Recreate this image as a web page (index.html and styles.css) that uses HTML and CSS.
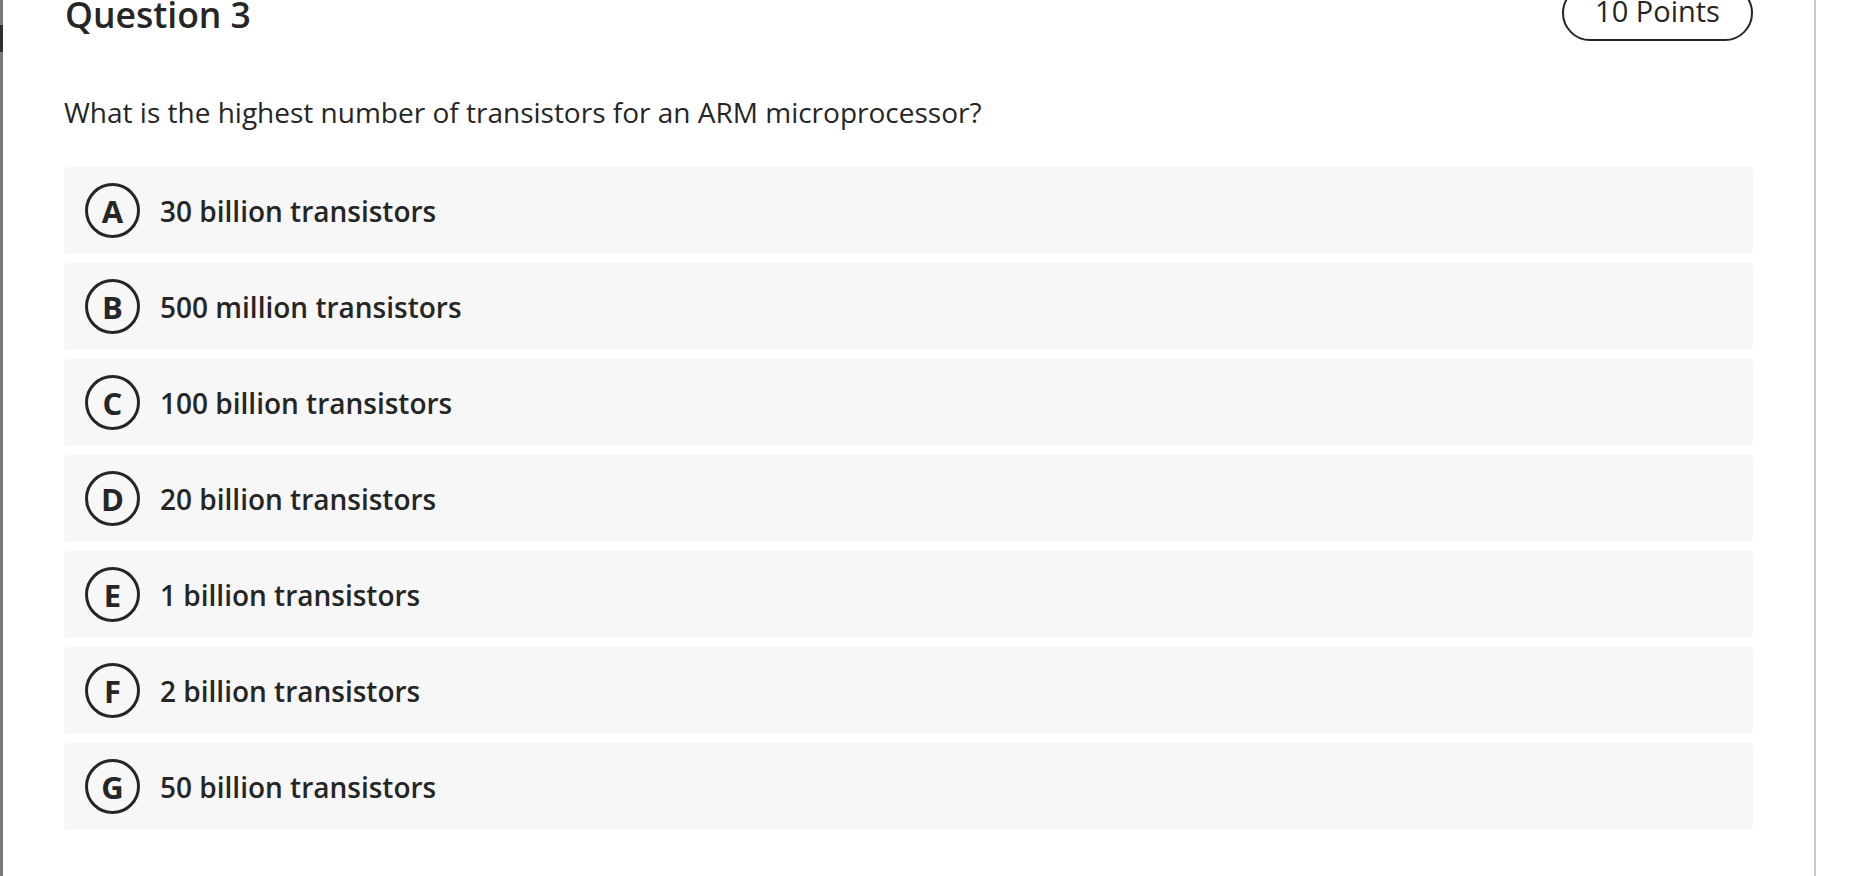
FILE: index.html
```html
<!DOCTYPE html>
<html>
<head>
<meta charset="utf-8">
<link rel="stylesheet" href="styles.css">
</head>
<body>
<div class="page">
  <div class="edge"><div class="edge-mark"></div></div>
  <main class="content">
    <header class="q-head">
      <h2 class="q-title">Question 3</h2>
      <span class="points">10 Points</span>
    </header>
    <p class="q-text">What is the highest number of transistors for an ARM microprocessor?</p>
    <ul class="options">
      <li class="option"><span class="letter">A</span><span class="label">30 billion transistors</span></li>
      <li class="option"><span class="letter">B</span><span class="label">500 million transistors</span></li>
      <li class="option"><span class="letter">C</span><span class="label">100 billion transistors</span></li>
      <li class="option"><span class="letter">D</span><span class="label">20 billion transistors</span></li>
      <li class="option"><span class="letter">E</span><span class="label">1 billion transistors</span></li>
      <li class="option"><span class="letter">F</span><span class="label">2 billion transistors</span></li>
      <li class="option"><span class="letter">G</span><span class="label">50 billion transistors</span></li>
    </ul>
  </main>
  <div class="divider"></div>
  <div class="gutter"></div>
</div>
</body>
</html>
```

FILE: styles.css
```css
html, body {
  margin: 0;
  padding: 0;
  background: #ffffff;
  overflow: hidden;
}
body {
  font-family: "Open Sans", "Noto Sans", sans-serif;
  color: #262626;
}
.page {
  display: flex;
  height: 876px;
}
.edge {
  width: 3px;
  background: #7b7b7b;
  flex: none;
  padding-top: 25px;
  box-sizing: border-box;
}
.edge-mark {
  width: 3px;
  height: 27px;
  background: #2f2f2f;
}
.content {
  width: 1811px;
  box-sizing: border-box;
  padding: 0 61px;
  flex: none;
}
.divider {
  width: 2px;
  background: #c9c9c9;
  flex: none;
}
.gutter {
  flex: 1;
}
.q-head {
  display: flex;
  justify-content: space-between;
  align-items: flex-start;
  margin-top: -9px;
}
.q-title {
  margin: 0;
  font-size: 35.5px;
  font-weight: 600;
  line-height: 46px;
  padding-left: 1px;
}
.points {
  box-sizing: border-box;
  width: 191px;
  height: 56px;
  margin-top: -6px;
  padding-bottom: 5px;
  border: 2px solid #262626;
  border-radius: 28px;
  display: flex;
  align-items: center;
  justify-content: center;
  font-size: 29px;
  font-weight: 500;
}
.q-text {
  margin: 52px 0 0 0;
  font-size: 28px;
  line-height: 38px;
  font-weight: 400;
}
.options {
  list-style: none;
  margin: 36px 0 0 0;
  padding: 0;
  display: flex;
  flex-direction: column;
  gap: 9px;
}
.option {
  height: 87px;
  background: #f7f7f7;
  border-radius: 4px;
  display: flex;
  align-items: center;
  padding-left: 21px;
  gap: 20px;
}
.letter {
  box-sizing: border-box;
  width: 55px;
  height: 55px;
  border: 3px solid #262626;
  border-radius: 50%;
  display: flex;
  align-items: center;
  justify-content: center;
  font-size: 31px;
  font-weight: 700;
  flex: none;
}
.label {
  font-size: 28px;
  font-weight: 600;
}
```
